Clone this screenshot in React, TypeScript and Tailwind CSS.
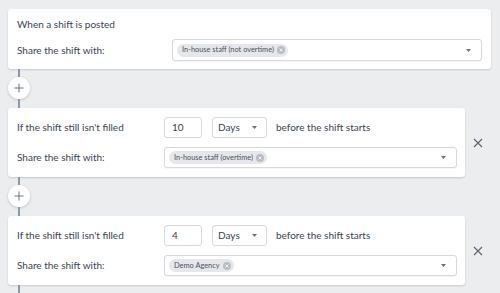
import React from "react";

const FONT = { fontFamily: "Lato, 'Open Sans', 'Liberation Sans', sans-serif" };

function Caret() {
  return (
    <svg width="5" height="3" viewBox="0 0 5 3" className="shrink-0">
      <path d="M0 0 L5 0 L2.5 3 Z" fill="#6a717b" />
    </svg>
  );
}

function Chip({ label }: { label: string }) {
  return (
    <span className="inline-flex items-center gap-[3px] h-[13px] pl-[5px] pr-[3px] rounded-full bg-[#e6e7ea] text-[7.4px] text-[#4a5260] leading-none">
      {label}
      <svg width="8" height="8" viewBox="0 0 8 8">
        <circle cx="4" cy="4" r="4" fill="#b9bdc4" />
        <path d="M2.6 2.6 L5.4 5.4 M5.4 2.6 L2.6 5.4" stroke="#eef0f2" strokeWidth="1" />
      </svg>
    </span>
  );
}

function ShareSelect({ chip, h = "h-[22px]" }: { chip: string; h?: string }) {
  return (
    <div className={`flex-1 ${h} flex items-center justify-between border border-[#d6d9de] rounded-[3px] bg-white pl-[4px] pr-[10px] shadow-[0_1px_1px_rgba(0,0,0,0.04)]`}>
      <Chip label={chip} />
      <Caret />
    </div>
  );
}

function Connector() {
  return (
    <div className="flex flex-col items-center w-[22px]">
      <div className="w-[2px] h-[8px] bg-[#8c9aa8]" />
      <div className="w-[22px] h-[22px] rounded-full bg-white shadow-[0_1px_3px_rgba(0,0,0,0.18)] flex items-center justify-center">
        <svg width="10" height="10" viewBox="0 0 10 10">
          <path d="M5 0.5 V9.5 M0.5 5 H9.5" stroke="#6b7280" strokeWidth="1" />
        </svg>
      </div>
      <div className="w-[2px] h-[9px] bg-[#8c9aa8]" />
    </div>
  );
}

function EscalationRow({ value, chip }: { value: string; chip: string }) {
  return (
    <div className="flex items-center">
      <div className="flex-1 bg-white rounded-[3px] shadow-[0_1px_2px_rgba(0,0,0,0.16)] pl-[9px] pr-[8px] pt-[9px] pb-[9px] flex flex-col gap-[9px]">
        <div className="flex items-center h-[21px]">
          <span className="w-[147px] text-[10px] text-[#3a4352]">If the shift still isn't filled</span>
          <div className="w-[38px] h-[21px] border border-[#d6d9de] rounded-[3px] flex items-center pl-[7px] text-[10px] text-[#3a4352]">
            {value}
          </div>
          <div className="ml-[10px] w-[55px] h-[21px] border border-[#d6d9de] rounded-[3px] flex items-center justify-between pl-[5px] pr-[9px] text-[10px] text-[#3a4352]">
            Days
            <Caret />
          </div>
          <span className="ml-[9px] text-[10px] text-[#3a4352]">before the shift starts</span>
        </div>
        <div className="flex items-center">
          <span className="w-[147px] text-[10px] text-[#3a4352]">Share the shift with:</span>
          <ShareSelect chip={chip} h="h-[21px]" />
        </div>
      </div>
      <div className="w-[26px] flex items-center justify-center">
        <svg width="10" height="10" viewBox="0 0 10 10">
          <path d="M1 1 L9 9 M9 1 L1 9" stroke="#5a6270" strokeWidth="1.1" />
        </svg>
      </div>
    </div>
  );
}

export default function App() {
  return (
    <div style={FONT} className="w-[500px] h-[293px] overflow-hidden bg-[#ecedef] pt-[9px] pl-[8px] pr-[9px]">
      <div className="bg-white rounded-[3px] shadow-[0_1px_2px_rgba(0,0,0,0.16)] px-[9px] pt-[8px] pb-[8px] flex flex-col gap-[8px]">
        <div className="h-[14px] flex items-center text-[10px] text-[#3a4352]">When a shift is posted</div>
        <div className="flex items-center">
          <span className="w-[155px] text-[10px] text-[#3a4352]">Share the shift with:</span>
          <ShareSelect chip="In-house staff (not overtime)" />
        </div>
      </div>
      <Connector />
      <EscalationRow value="10" chip="In-house staff (overtime)" />
      <Connector />
      <EscalationRow value="4" chip="Demo Agency" />
      <div className="w-[22px] flex justify-center">
        <div className="w-[2px] h-[20px] bg-[#8c9aa8]" />
      </div>
    </div>
  );
}
